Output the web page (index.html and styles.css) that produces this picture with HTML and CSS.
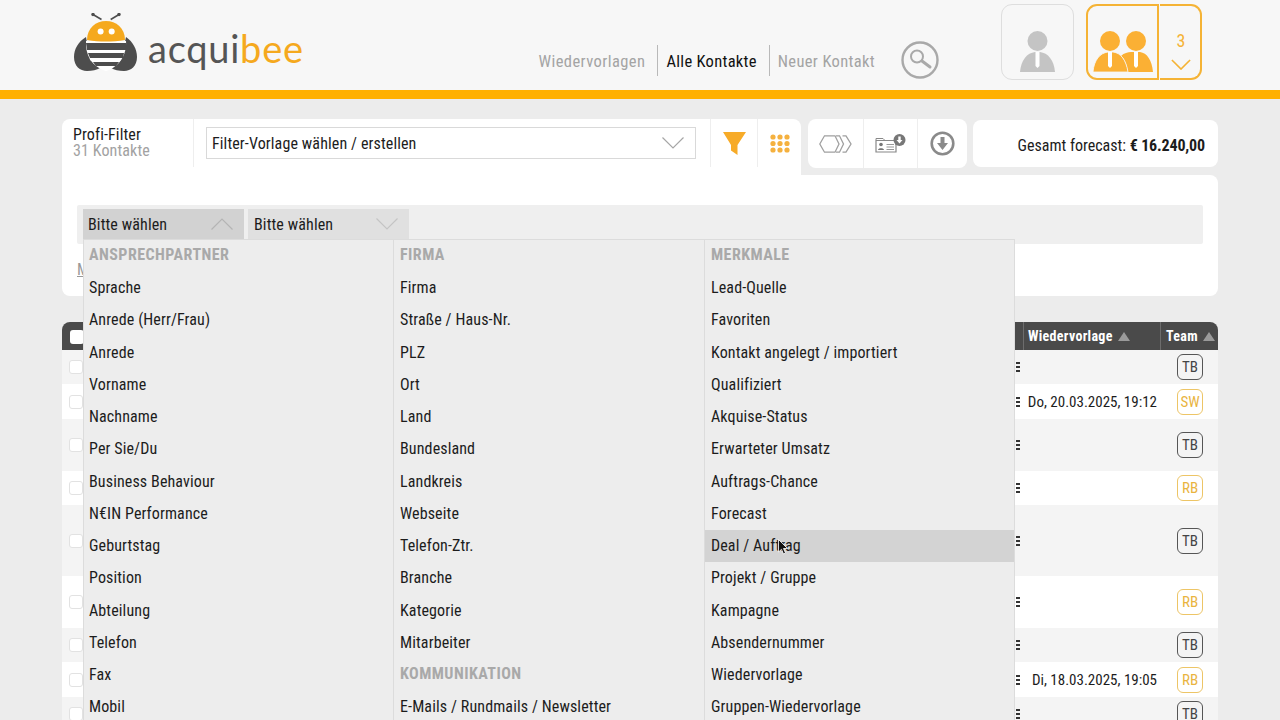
FILE: index.html
```html
<!DOCTYPE html>
<html lang="de">
<head>
<meta charset="utf-8">
<title>acquibee</title>
<link rel="stylesheet" href="styles.css">
</head>
<body>
<header class="header">
  <a class="logo">
    <svg class="bee" viewBox="74 13 64 60" width="64" height="60">
      <path d="M86 37C78 42 74 49 74 57C74 66 80 71 87 71C92 71 97 70 100 68L90 60Z" fill="#4d4d4d"/>
      <path d="M126 37C133 42 137 49 137 57C137 66 131 71 124 71C119 71 114 70 111 68L121 60Z" fill="#4d4d4d"/>
      <path d="M86 41C85 55 92 67 106 71C119 67 127 55 126 41Z" fill="#fff"/>
      <path d="M86 43H126V50H87ZM88 53H124L123 58H90ZM93 62H119L116 66H96Z" fill="#4d4d4d"/>
      <path d="M87 40C87 28 96 21 106 21C116 21 125 28 125 40C112 42 100 42 87 40Z" fill="#f5a91e"/>
      <circle cx="100.6" cy="31.5" r="3" fill="#fff"/>
      <circle cx="111.7" cy="31.5" r="3" fill="#fff"/>
      <path d="M93 14.5L101.5 19.5M119 14.5L110.7 19.5" stroke="#4d4d4d" stroke-width="1.6" fill="none"/>
      <circle cx="93" cy="14.5" r="1.7" fill="#4d4d4d"/>
      <circle cx="119" cy="14.5" r="1.7" fill="#4d4d4d"/>
    </svg>
    <span class="wordmark">acqui<b>bee</b></span>
  </a>
  <nav class="nav">
    <a class="nav-item first">Wiedervorlagen</a>
    <a class="nav-item active">Alle Kontakte</a>
    <a class="nav-item last">Neuer Kontakt</a>
  </nav>
  <svg class="search" viewBox="0 0 38 38" width="38" height="38">
    <circle cx="19" cy="19" r="17.5" fill="none" stroke="#a9a9a9" stroke-width="2.4"/>
    <circle cx="16" cy="15.5" r="6" fill="none" stroke="#a9a9a9" stroke-width="2"/>
    <path d="M21 20L29 26" stroke="#a9a9a9" stroke-width="3" stroke-linecap="round"/>
  </svg>
  <div class="tile">
    <svg viewBox="0 0 35 41" width="35" height="41">
      <circle cx="17.500" cy="10" r="10" fill="#c4c4c4"/>
      <path d="M0 41C1 29 7 22 15 21H20C28 22 34 29 35 41Z" fill="#c4c4c4"/>
      <path d="M15.500 21H19.500V35L17.500 37L15.500 35Z" fill="#fff"/>
    </svg>
  </div>
  <div class="team-tile">
    <div class="team-icons">
      <svg viewBox="0 0 60 41" width="60" height="41">
        <circle cx="43" cy="10" r="10" fill="#fbb034"/>
        <path d="M35 41C34 34 32 28 28 25C31 22 35 21 38 21H47C54 22 59 29 60 41Z" fill="#fbb034"/>
        <path d="M41 21H45V35L43 37L41 35Z" fill="#fff"/>
        <path d="M0 41C1 29 7 22 15 21H20C28 22 33 29 35 41Z" fill="#fbb034" stroke="#f7f7f7" stroke-width="0.800"/>
        <circle cx="17" cy="10" r="10" fill="#fbb034"/>
        <path d="M15 21H19V35L17 37L15 35Z" fill="#fff"/>
      </svg>
    </div>
    <div class="team-count">
      <span>3</span>
      <svg viewBox="0 0 22 12" width="20" height="11"><path d="M1 1L11 11L21 1" fill="none" stroke="#f5b335" stroke-width="1.800"/></svg>
    </div>
  </div>
</header>
<main class="main">
  <div class="toolbar">
    <div class="tab">
      <div class="tab-title"><span>Profi-Filter</span><small>31 Kontakte</small></div>
      <div class="tab-select-cell">
        <div class="template-select">
          <span>Filter-Vorlage wählen / erstellen</span>
          <svg viewBox="0 0 22 12" width="22" height="12"><path d="M0.500 0.500L11 11L21.500 0.500" fill="none" stroke="#a6a6a6" stroke-width="1.200"/></svg>
        </div>
      </div>
      <div class="tab-icon">
        <svg viewBox="0 0 23 23" width="23" height="23"><path d="M0 0H23L14.500 13V23L8 18.500V13Z" fill="#f7ab28"/></svg>
      </div>
      <div class="tab-icon">
        <svg viewBox="0 0 20 19" width="20" height="19" fill="#f5b13f">
          <circle cx="3" cy="3" r="2.600"/><circle cx="10" cy="3" r="2.600"/><circle cx="17" cy="3" r="2.600"/>
          <circle cx="3" cy="9.500" r="2.600"/><circle cx="10" cy="9.500" r="2.600"/><circle cx="17" cy="9.500" r="2.600"/>
          <circle cx="3" cy="16" r="2.600"/><circle cx="10" cy="16" r="2.600"/><circle cx="17" cy="16" r="2.600"/>
        </svg>
      </div>
    </div>
    <div class="tools">
      <div class="tool tool-a">
        <svg viewBox="0 0 33 18" width="33" height="18" fill="none" stroke="#a0a0a0" stroke-width="1.300">
          <path d="M0.800 9L5.500 0.800H16L20 9L16 17.200H5.500Z"/>
          <path d="M17 0.800H20.500L24.500 9L20.500 17.200H17"/>
          <path d="M23.500 0.800H27L32 9L27 17.200H23.500"/>
        </svg>
      </div>
      <div class="tool tool-b">
        <svg viewBox="0 0 31 19" width="31" height="19">
          <path d="M1 6.500H21V18H1Z" fill="#fff" stroke="#888" stroke-width="1.200"/>
          <path d="M1 6V4.500H8L9.500 6" fill="none" stroke="#888"/>
          <circle cx="6" cy="10.500" r="1.800" fill="#777"/>
          <path d="M3 16C3 13.500 9 13.500 9 16Z" fill="#777"/>
          <path d="M11.500 10.500H19M11.500 13H19M11.500 15.500H19" stroke="#999"/>
          <circle cx="24.500" cy="6" r="6" fill="#777"/>
          <path d="M23.300 2.500H25.700V6H27.500L24.500 9.500L21.500 6H23.300Z" fill="#fff"/>
        </svg>
      </div>
      <div class="tool tool-c">
        <svg viewBox="0 0 25 25" width="25" height="25">
          <circle cx="12.500" cy="12.500" r="10.800" fill="none" stroke="#8a8a8a" stroke-width="2.600"/>
          <path d="M10.500 6H14.500V12H18L12.500 19L7 12H10.500Z" fill="#8a8a8a"/>
        </svg>
      </div>
    </div>
    <div class="forecast">Gesamt forecast: <b>€ 16.240,00</b></div>
  </div>

  <section class="panel">
    <div class="strip">
      <button class="pick open">Bitte wählen
        <svg viewBox="0 0 22 12" width="22" height="12"><path d="M0.500 11.500L11 1L21.500 11.500" fill="none" stroke="#b4b4b4" stroke-width="1.200"/></svg>
      </button>
      <button class="pick">Bitte wählen
        <svg viewBox="0 0 22 12" width="22" height="12"><path d="M0.500 0.500L11 11L21.500 0.500" fill="none" stroke="#c4c4c4" stroke-width="1.200"/></svg>
      </button>
      <div class="menu">
        <ul class="menu-col">
          <li class="menu-head">Ansprechpartner</li>
          <li>Sprache</li>
          <li>Anrede (Herr/Frau)</li>
          <li>Anrede</li>
          <li>Vorname</li>
          <li>Nachname</li>
          <li>Per Sie/Du</li>
          <li>Business Behaviour</li>
          <li>N€IN Performance</li>
          <li>Geburtstag</li>
          <li>Position</li>
          <li>Abteilung</li>
          <li>Telefon</li>
          <li>Fax</li>
          <li>Mobil</li>
        </ul>
        <ul class="menu-col">
          <li class="menu-head">Firma</li>
          <li>Firma</li>
          <li>Straße / Haus-Nr.</li>
          <li>PLZ</li>
          <li>Ort</li>
          <li>Land</li>
          <li>Bundesland</li>
          <li>Landkreis</li>
          <li>Webseite</li>
          <li>Telefon-Ztr.</li>
          <li>Branche</li>
          <li>Kategorie</li>
          <li>Mitarbeiter</li>
          <li class="menu-head">Kommunikation</li>
          <li>E-Mails / Rundmails / Newsletter</li>
        </ul>
        <ul class="menu-col">
          <li class="menu-head">Merkmale</li>
          <li>Lead-Quelle</li>
          <li>Favoriten</li>
          <li>Kontakt angelegt / importiert</li>
          <li>Qualifiziert</li>
          <li>Akquise-Status</li>
          <li>Erwarteter Umsatz</li>
          <li>Auftrags-Chance</li>
          <li>Forecast</li>
          <li class="hover">Deal / Auftrag
            <svg class="cursor" viewBox="0 0 11 16" width="11" height="16"><path d="M0.500 0.500V13L3.500 10.300L5.500 15L7.500 14L5.500 9.500H9.500Z" fill="#111" stroke="#fff" stroke-width="0.800"/></svg>
          </li>
          <li>Projekt / Gruppe</li>
          <li>Kampagne</li>
          <li>Absendernummer</li>
          <li>Wiedervorlage</li>
          <li>Gruppen-Wiedervorlage</li>
        </ul>
      </div>
    </div>
    <a class="add-link">M</a>
  </section>

  <section class="table">
    <div class="thead">
      <div class="th-check"><span class="head-box"></span></div>
      <div class="th-fill"></div>
      <div class="th th-wv">Wiedervorlage <i class="tri"></i></div>
      <div class="th th-team">Team <i class="tri"></i></div>
    </div>
    <div class="row h34"><span class="box"></span><span class="fill"></span><i class="dash"></i><span class="wv"></span><span class="team"><em class="badge">TB</em></span></div>
    <div class="row h35 alt"><span class="box"></span><span class="fill"></span><i class="dash"></i><span class="wv">Do, 20.03.2025, 19:12</span><span class="team"><em class="badge gold">SW</em></span></div>
    <div class="row h52"><span class="box"></span><span class="fill"></span><i class="dash"></i><span class="wv"></span><span class="team"><em class="badge">TB</em></span></div>
    <div class="row h34 alt"><span class="box"></span><span class="fill"></span><i class="dash"></i><span class="wv"></span><span class="team"><em class="badge gold">RB</em></span></div>
    <div class="row h71"><span class="box"></span><span class="fill"></span><i class="dash"></i><span class="wv"></span><span class="team"><em class="badge">TB</em></span></div>
    <div class="row h52 alt"><span class="box"></span><span class="fill"></span><i class="dash"></i><span class="wv"></span><span class="team"><em class="badge gold">RB</em></span></div>
    <div class="row h34"><span class="box"></span><span class="fill"></span><i class="dash"></i><span class="wv"></span><span class="team"><em class="badge">TB</em></span></div>
    <div class="row h35 alt"><span class="box"></span><span class="fill"></span><i class="dash"></i><span class="wv">Di, 18.03.2025, 19:05</span><span class="team"><em class="badge gold">RB</em></span></div>
    <div class="row h34"><span class="box"></span><span class="fill"></span><i class="dash"></i><span class="wv"></span><span class="team"><em class="badge">TB</em></span></div>
  </section>
</main>
</body>
</html>
```

FILE: styles.css
```css
* { box-sizing: border-box; }
html, body { margin: 0; height: 720px; overflow: hidden; }
body {
  background: #ececec;
  font-family: Roboto, sans-serif;
  font-stretch: 75%;
  font-size: 16px;
  letter-spacing: 0.12px;
  color: #1c1c1c;
}

/* Header */
.header {
  height: 99px;
  background: #f7f7f7;
  border-bottom: 9px solid #ffb000;
  display: flex;
  align-items: flex-start;
  padding: 4px 78px 0 74px;
}
.logo { display: flex; align-items: flex-end; margin-top: 9px; height: 60px; }
.bee { display: block; }
.wordmark {
  margin-left: 10px;
  margin-bottom: 3px;
  font-family: Lato, sans-serif;
  font-stretch: normal;
  font-weight: 400;
  font-size: 38px;
  letter-spacing: 0.75px;
  line-height: 44px;
  color: #555;
}
.wordmark b { font-weight: 400; color: #f5a91e; }
.nav { display: flex; margin: 41px 0 0 auto; }
.nav-item {
  height: 31px;
  font-size: 16.5px;
  letter-spacing: 0.5px;
  line-height: 33px;
  padding: 0 12px 0 8px;
  border-left: 1px solid #b9b9b9;
  color: #a4a4a4;
}
.nav-item.first { border-left: 0; letter-spacing: 0.42px; }
.nav-item.active { color: #111; letter-spacing: 0.3px; }
.nav-item.last { letter-spacing: 0.35px; }
.search { margin: 37px 62px 0 14px; flex: none; }
.tile {
  width: 73px;
  height: 76px;
  background: #f7f7f7;
  border: 1px solid #dedede;
  border-radius: 11px;
  display: flex;
  justify-content: center;
  align-items: flex-end;
  padding-bottom: 7px;
}
.team-tile { display: flex; height: 76px; margin-left: 12px; }
.team-icons {
  width: 73px;
  border: 2px solid #f5b335;
  border-radius: 11px 0 0 11px;
  display: flex;
  justify-content: center;
  align-items: flex-end;
  padding: 0 0 6px 1px;
}
.team-count {
  width: 42px;
  border: 2px solid #f5b335;
  border-left: 0;
  border-radius: 0 11px 11px 0;
  margin-left: 1px;
  display: flex;
  flex-direction: column;
  align-items: center;
  padding: 25px 0 0 2px;
  gap: 8px;
  font-size: 18px;
  color: #f5b335;
  line-height: 20px;
}

/* Toolbar */
.main { padding: 20px 62px 0; }
.toolbar { display: flex; align-items: flex-start; height: 56px; }
.tab {
  width: 739px;
  height: 56px;
  background: #fff;
  border-radius: 8px 8px 0 0;
  display: flex;
}
.tab-title {
  width: 132px;
  padding: 8px 0 0 11px;
  display: flex;
  flex-direction: column;
  line-height: 16px;
  border-right: 1px solid #eee;
  height: 48px;
}
.tab-title small { font-size: 16px; color: #a2a2a2; }
.tab-select-cell { width: 517px; padding: 8px 14px 0 12px; border-right: 1px solid #eee; height: 48px; }
.template-select {
  height: 32px;
  background: #fff;
  border: 1px solid #d9d9d9;
  display: flex;
  align-items: center;
  justify-content: space-between;
  padding: 0 11px 0 5px;
}
.tab-icon {
  height: 48px;
  display: flex;
  align-items: center;
  justify-content: center;
  width: 47px;
  border-right: 1px solid #eee;
}
.tab-icon:last-child { border-right: 0; flex: 1; }
.tools {
  margin-left: 7px;
  width: 159px;
  height: 49px;
  background: #fff;
  border-radius: 8px;
  display: flex;
}
.tool {
  display: flex;
  align-items: center;
  justify-content: center;
  border-right: 1px solid #eee;
}
.tool-a { width: 56px; }
.tool-b { width: 54px; }
.tool-c { width: 49px; border-right: 0; }
.forecast {
  margin: 1px 0 0 6px;
  flex: 1;
  height: 47px;
  background: #fff;
  border-radius: 8px;
  text-align: right;
  padding-right: 13px;
  line-height: 51px;
  white-space: nowrap;
  letter-spacing: 0;
}
.forecast b { letter-spacing: -0.15px; }

/* Filter panel */
.panel {
  background: #fff;
  height: 121px;
  border-radius: 0 8px 8px 8px;
  padding: 30px 15px 0;
}
.strip {
  position: relative;
  height: 39px;
  background: #efefef;
  padding: 4px 6px 0;
  display: flex;
  gap: 4px;
  border-radius: 2px;
}
.pick {
  width: 161px;
  height: 30px;
  background: #e0e0e0;
  border: 0;
  padding: 0 11px 0 6px;
  font: inherit;
  font-stretch: inherit;
  letter-spacing: inherit;
  color: inherit;
  display: flex;
  align-items: center;
  justify-content: space-between;
}
.pick.open { background: #d2d2d2; padding-left: 5px; }
.menu {
  position: absolute;
  top: 34px;
  left: 6px;
  width: 932px;
  background: #ededed;
  border-left: 1px solid #dcdcdc;
  border-top: 1px solid #dcdcdc;
  border-right: 1px solid #dcdcdc;
  display: grid;
  grid-template-columns: 310px 311px 1fr;
  z-index: 2;
}
.menu-col { list-style: none; margin: 0; padding: 0; border-right: 1px solid #dcdcdc; }
.menu-col:last-child { border-right: 0; }
.menu-col li {
  height: 32.24px;
  line-height: 31px;
  padding-left: 6px;
  white-space: nowrap;
  position: relative;
}
.menu-col:first-child li { padding-left: 5px; }
.menu-col .menu-head { color: #a9a9a9; font-weight: 700; text-transform: uppercase; letter-spacing: 0.45px; line-height: 30px; }
.menu-col .hover { background: #d3d3d3; }
.cursor { position: absolute; left: 73px; top: 9px; }
.add-link {
  display: block;
  margin-top: 16px;
  color: #999;
  text-decoration: underline;
}

/* Table */
.table { margin-top: 26px; }
.thead {
  height: 28px;
  background: #4a4a4a;
  border-radius: 8px 8px 0 0;
  display: flex;
  color: #fff;
  font-weight: 700;
  font-size: 14px;
  letter-spacing: 0.3px;
}
.th-check { width: 40px; padding: 8px 0 0 8px; }
.head-box { display: block; width: 14px; height: 14px; background: #fff; border-radius: 3px; }
.th-fill { flex: 1; }
.th { display: flex; align-items: center; border-left: 1px solid #6d6d6d; padding-left: 4px; gap: 5px; white-space: nowrap; }
.th-wv { width: 137px; }
.th-team { width: 58px; padding-left: 5px; }
.tri { width: 0; height: 0; border-left: 6px solid transparent; border-right: 6px solid transparent; border-bottom: 9px solid #9a9a9a; }
.row { display: flex; align-items: center; background: #f4f4f4; }
.row.alt { background: #fff; }
.h34 { height: 34px; }
.h35 { height: 35px; }
.h52 { height: 52px; }
.h71 { height: 71px; }
.box {
  width: 14px;
  height: 14px;
  margin-left: 7px;
  background: #fff;
  border: 1px solid #e2e2e2;
  border-radius: 3px;
}
.fill { flex: 1; }
.dash {
  width: 4px;
  height: 10px;
  margin-right: 1px;
  background: repeating-linear-gradient(#333 0 2px, transparent 2px 4px);
}
.wv { width: 139px; text-align: right; padding-right: 3px; white-space: nowrap; font-size: 15px; letter-spacing: 0; }
.team { width: 58px; display: flex; justify-content: center; padding-left: 2px; }
.badge {
  width: 26px;
  height: 26px;
  border: 1px solid #555;
  border-radius: 6px;
  font-style: normal;
  font-size: 15px;
  line-height: 25px;
  letter-spacing: 0;
  text-align: center;
  color: #444;
}
.badge.gold { border-color: #edc566; color: #e9b43f; }
```
